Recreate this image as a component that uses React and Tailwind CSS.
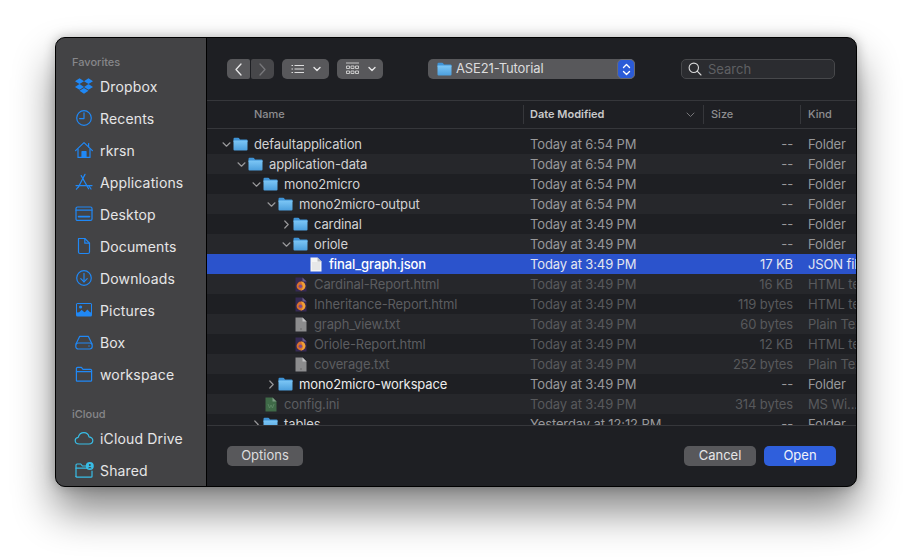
import React from "react";
import { FaDropbox } from "react-icons/fa";

const Folder = ({ w = 15, h = 14, id }) => (
  <svg width={w} height={h} viewBox="0 0 15 14" className="shrink-0">
    <defs>
      <linearGradient id={id} x1="0" y1="0" x2="0" y2="1">
        <stop offset="0" stopColor="#7cc6f5" />
        <stop offset="1" stopColor="#4c9fdd" />
      </linearGradient>
    </defs>
    <path d="M0.5 2 Q0.5 0.8 1.6 0.8 H5.2 Q5.9 0.8 6.3 1.4 L7 2.4 H13.5 Q14.5 2.4 14.5 3.4 V5 H0.5 Z" fill="#3f93d6" />
    <path d="M0.5 3.6 H14.5 V12.6 Q14.5 13.5 13.5 13.5 H1.5 Q0.5 13.5 0.5 12.6 Z" fill={`url(#${id})`} />
  </svg>
);

const Doc = ({ fill = "#8c8c8e", fold = "#c4c4c6", mark }) => (
  <svg width="12" height="15" viewBox="0 0 12 15" className="shrink-0">
    <path d="M0.5 0.5 H7.5 L11.5 4.5 V14.5 H0.5 Z" fill={fill} />
    <path d="M7.5 0.5 L11.5 4.5 H7.5 Z" fill={fold} />
    {mark}
  </svg>
);

const FileWhite = () => (
  <Doc
    fill="#f4f4f4"
    fold="#b9b9bb"
    mark={
      <g stroke="#cfcfd1" strokeWidth="0.7">
        <path d="M2 6h8M2 8h8M2 10h8M2 12h8" />
      </g>
    }
  />
);
const FileGray = () => <Doc mark={<path d="M5 12h2" stroke="#6a6a6c" strokeWidth="1" />} />;
const FileGreen = () => (
  <Doc
    fill="#3f6a48"
    fold="#7d9c83"
    mark={<path d="M3 7l1.5 4 1.5-3 1.5 3L9 7" fill="none" stroke="#5f8a68" strokeWidth="0.8" />}
  />
);
const FileFox = () => (
  <svg width="12" height="15" viewBox="0 0 12 15" className="shrink-0">
    <path d="M0.5 0.5 H7.5 L11.5 4.5 V14.5 H0.5 Z" fill="#352a55" />
    <path d="M7.5 0.5 L11.5 4.5 H7.5 Z" fill="#6a5e8a" />
    <circle cx="6" cy="9" r="4.4" fill="#d9702c" />
    <path d="M6 4.600 Q10 5 10.400 9 Q10 13 6 13.400 Q8.400 11 7.800 9 Q7.200 7 6 4.600Z" fill="#eea238" />
    <circle cx="5.400" cy="9.200" r="1.800" fill="#7a4a8e" />
  </svg>
);

const Chev = ({ open }) => (
  <svg width="9" height="9" viewBox="0 0 9 9" className="shrink-0" fill="none" stroke="#98989a" strokeWidth="1.2" strokeLinecap="round" strokeLinejoin="round">
    {open ? <path d="M1 2.800 L4.500 6.200 L8 2.800" /> : <path d="M2.800 1 L6.200 4.500 L2.800 8" />}
  </svg>
);

const rows = [
  { n: "defaultapplication", l: 0, o: "open", d: "Today at 6:54 PM", s: "--", k: "Folder" },
  { n: "application-data", l: 1, o: "open", d: "Today at 6:54 PM", s: "--", k: "Folder" },
  { n: "mono2micro", l: 2, o: "open", d: "Today at 6:54 PM", s: "--", k: "Folder" },
  { n: "mono2micro-output", l: 3, o: "open", d: "Today at 6:54 PM", s: "--", k: "Folder" },
  { n: "cardinal", l: 4, o: "closed", d: "Today at 3:49 PM", s: "--", k: "Folder" },
  { n: "oriole", l: 4, o: "open", d: "Today at 3:49 PM", s: "--", k: "Folder" },
  { n: "final_graph.json", l: 5, icon: FileWhite, sel: true, d: "Today at 3:49 PM", s: "17 KB", k: "JSON file" },
  { n: "Cardinal-Report.html", l: 4, icon: FileFox, dim: true, d: "Today at 3:49 PM", s: "16 KB", k: "HTML text" },
  { n: "Inheritance-Report.html", l: 4, icon: FileFox, dim: true, d: "Today at 3:49 PM", s: "119 bytes", k: "HTML text" },
  { n: "graph_view.txt", l: 4, icon: FileGray, dim: true, d: "Today at 3:49 PM", s: "60 bytes", k: "Plain Text" },
  { n: "Oriole-Report.html", l: 4, icon: FileFox, dim: true, d: "Today at 3:49 PM", s: "12 KB", k: "HTML text" },
  { n: "coverage.txt", l: 4, icon: FileGray, dim: true, d: "Today at 3:49 PM", s: "252 bytes", k: "Plain Text" },
  { n: "mono2micro-workspace", l: 3, o: "closed", d: "Today at 3:49 PM", s: "--", k: "Folder", bright: true },
  { n: "config.ini", l: 2, icon: FileGreen, dim: true, d: "Today at 3:49 PM", s: "314 bytes", k: "MS Wi..." },
  { n: "tables", l: 2, o: "closed", d: "Yesterday at 12:12 PM", s: "--", k: "Folder" },
];

const indentClass = ["pl-[15px]", "pl-[30px]", "pl-[45px]", "pl-[60px]", "pl-[75px]", "pl-[90px]"];

function Row({ r, i }) {
  const bg = r.sel ? "bg-[#2b53cc]" : i % 2 === 1 ? "bg-[#26272b]" : "bg-[#1e1f23]";
  const nameColor = r.sel ? "text-white" : r.dim ? "text-[#5c5d60]" : r.bright ? "text-[#ececec]" : "text-[#d2d2d3]";
  const otherColor = r.sel ? "text-[#e4e6f2]" : r.dim ? "text-[#58595c]" : "text-[#98989a]";
  return (
    <div className={`flex h-[20px] shrink-0 items-center text-[13px] leading-[20px] tracking-[-0.12px] ${bg}`}>
      <div className={`flex w-[316px] shrink-0 items-center ${indentClass[r.l]}`}>
        <div className="flex w-[11px] shrink-0 justify-start">{r.o ? <Chev open={r.o === "open"} /> : null}</div>
        <div className="flex w-[21px] shrink-0 items-center">
          {r.o ? <Folder id={`f${i}`} /> : <div className="flex w-[16px] justify-center">{React.createElement(r.icon)}</div>}
        </div>
        <span className={`whitespace-nowrap ${nameColor} ${r.sel ? "font-medium" : ""}`}>{r.n}</span>
      </div>
      <div className={`w-[180px] shrink-0 whitespace-nowrap pl-[7px] ${otherColor}`}>{r.d}</div>
      <div className={`w-[97px] shrink-0 whitespace-nowrap pr-[7px] text-right ${otherColor}`}>{r.s}</div>
      <div className={`w-[56px] shrink-0 overflow-hidden whitespace-nowrap pl-[8px] ${otherColor}`}>{r.k}</div>
    </div>
  );
}

const blue = "#2088f5";
const cyan = "#38bde6";
const I = ({ children, c = blue }) => (
  <svg width="20" height="18" viewBox="0 0 20 18" fill="none" stroke={c} strokeWidth="1.2" strokeLinecap="round" strokeLinejoin="round">
    {children}
  </svg>
);

const side = [
  ["Dropbox", <FaDropbox size={18} color={blue} />],
  ["Recents", <I><circle cx="10" cy="9" r="7.300" /><path d="M10 3.800 V9.600 H5.600" /></I>],
  ["rkrsn", <I><path d="M1.600 9.600 L10 1.600 L18.400 9.600" /><path d="M14.600 5.800 V2.600" /><path d="M4 8 V16.400 H16 V8" /><rect x="8" y="10.600" width="4" height="5.800" fill={blue} /></I>],
  ["Applications", <I><path d="M11 1.400 L4.400 14" /><path d="M7.200 2.600 L14.600 15.800" /><path d="M2 12.600 H18" /><path d="M2.400 16.200 L4.600 13.600" /><path d="M17 16 L15 13" /></I>],
  ["Desktop", <I><rect x="2" y="2" width="16" height="13.400" rx="1.500" /><path d="M2 5.200 H18" /><path d="M4.600 11.600 H15.400" strokeWidth="1.800" /></I>],
  ["Documents", <I><path d="M4.500 1.500 H10.800 L15.500 6.200 V15 Q15.500 16.500 14 16.500 H6 Q4.500 16.500 4.500 15 Z" /><path d="M10.800 1.500 V6.200 H15.500" /></I>],
  ["Downloads", <I><circle cx="10" cy="9" r="7.300" /><path d="M10 4.600 V12.800" /><path d="M6.800 9.600 L10 12.800 L13.200 9.600" /></I>],
  ["Pictures", <I><rect x="2" y="2" width="16" height="13.400" rx="1.500" fill={blue} stroke="none" /><rect x="3" y="3" width="14" height="8.400" fill="#434345" stroke="none" /><circle cx="6.600" cy="6" r="1.600" fill={blue} stroke="none" /><path d="M2.600 14 L7.600 8.800 L10.600 11.400 L13.400 8.600 L17.400 12.800 V14 Z" fill={blue} stroke="none" /></I>],
  ["Box", <I><path d="M2 11 L5.600 3.400 H14.400 L18 11" /><rect x="1.800" y="10" width="16.400" height="6" rx="2.400" /><circle cx="15" cy="13" r="0.700" fill={blue} stroke="none" /></I>],
  ["workspace", <I><path d="M2.400 15.400 V3.600 Q2.400 2.400 3.600 2.400 H7.400 L9 4.400 H16.400 Q17.600 4.400 17.600 5.600 V15.400 Q17.600 16.200 16.600 16.200 H3.400 Q2.400 16.200 2.400 15.400 Z" /><path d="M2.400 6.600 H17.600" /></I>],
];

const Item = ({ label, icon }) => (
  <div className="flex h-[32px] shrink-0 items-center pl-[18px]">
    <div className="flex w-[20px] shrink-0 items-center justify-center">{icon}</div>
    <span className="whitespace-nowrap pl-[6px] text-[14px] tracking-[0.15px] text-[#e6e6e7]">{label}</span>
  </div>
);

const Sep = () => <div className="h-[19px] w-px shrink-0 bg-[#36373b]" />;

export default function App() {
  return (
    <div className="h-[560px] w-[912px] overflow-hidden bg-white pl-[55px] pt-[37px] font-['Inter',sans-serif]">
      <div className="flex h-[450px] w-[802px] overflow-hidden rounded-[10px] border border-black bg-[#1e1f23] shadow-[0_24px_42px_rgba(0,0,0,0.48),0_0_12px_rgba(0,0,0,0.25)]">
        <aside className="flex w-[151px] shrink-0 flex-col overflow-hidden border-r border-black bg-[#434345] pt-[16px]">
          <div className="h-[16px] shrink-0 pl-[16px] text-[11px] font-medium leading-[17px] text-[#87878a]">Favorites</div>
          {side.map(([l, ic]) => (
            <Item key={l} label={l} icon={ic} />
          ))}
          <div className="mt-[16px] h-[16px] shrink-0 pl-[16px] text-[11px] font-medium leading-[17px] text-[#87878a]">iCloud</div>
          <Item
            label="iCloud Drive"
            icon={
              <I c={cyan}>
                <path d="M5.400 15 Q1.200 15 1.200 11.600 Q1.200 8.800 4.200 8.400 Q5.400 3.600 10 3.600 Q14 3.600 15 7.800 Q18.800 8.400 18.800 11.600 Q18.800 15 15 15 Z" />
              </I>
            }
          />
          <Item
            label="Shared"
            icon={
              <I c={cyan}>
                <path d="M2 15.400 V4 Q2 3 3 3 H6.800 L8.400 5 H12" />
                <path d="M2 7.200 H12.400" />
                <path d="M2 15.400 Q2 16.200 3 16.200 H17 Q18 16.200 18 15.400 V10" />
                <circle cx="15.800" cy="5" r="4" fill={cyan} stroke="none" />
                <circle cx="15.800" cy="3.900" r="1" fill="#434345" stroke="none" />
                <path d="M13.900 7.200 Q15.800 4.600 17.700 7.200 Z" fill="#434345" stroke="none" />
              </I>
            }
          />
        </aside>

        <main className="flex min-w-0 flex-1 flex-col text-[#d2d2d3]">
          <div className="flex h-[63px] shrink-0 items-start border-b border-[#36373b] pl-[20px] pt-[21px]">
            <button className="flex h-[20px] w-[23px] items-center justify-center rounded-l-[5px] rounded-r-[2px] bg-[#58585b]">
              <svg width="9" height="13" viewBox="0 0 9 13" fill="none" stroke="#e6e6e7" strokeWidth="1.300" strokeLinecap="round" strokeLinejoin="round"><path d="M7 1 L2 6.500 L7 12" /></svg>
            </button>
            <button className="ml-px flex h-[20px] w-[23px] items-center justify-center rounded-l-[2px] rounded-r-[5px] bg-[#47474a]">
              <svg width="9" height="13" viewBox="0 0 9 13" fill="none" stroke="#77777a" strokeWidth="1.300" strokeLinecap="round" strokeLinejoin="round"><path d="M2 1 L7 6.500 L2 12" /></svg>
            </button>
            <button className="ml-[8px] flex h-[20px] w-[47px] items-center justify-center gap-[9px] rounded-[5px] bg-[#58585b]">
              <svg width="13" height="10" viewBox="0 0 13 10" stroke="#dcdcdd" strokeWidth="1"><path d="M3.500 1.500H13M3.500 5H13M3.500 8.500H13M0.500 1.500H2M0.500 5H2M0.500 8.500H2" /></svg>
              <svg width="8" height="6" viewBox="0 0 8 6" fill="none" stroke="#e6e6e7" strokeWidth="1.400" strokeLinecap="round" strokeLinejoin="round"><path d="M1 1.500 L4 4.500 L7 1.500" /></svg>
            </button>
            <button className="ml-[8px] flex h-[20px] w-[46px] items-center justify-center gap-[8px] rounded-[5px] bg-[#58585b]">
              <svg width="15" height="14" viewBox="0 0 15 14" fill="none" stroke="#d2d2d3" strokeWidth="0.900"><path d="M1 1H14" /><path d="M1.500 4h3v2.500h-3zM6 4h3v2.500H6zM10.500 4h3v2.500h-3zM1.500 9h3v2.500h-3zM6 9h3v2.500H6zM10.500 9h3v2.500h-3z" /></svg>
              <svg width="8" height="6" viewBox="0 0 8 6" fill="none" stroke="#e6e6e7" strokeWidth="1.400" strokeLinecap="round" strokeLinejoin="round"><path d="M1 1.500 L4 4.500 L7 1.500" /></svg>
            </button>
            <div className="ml-[45px] flex h-[20px] w-[207px] items-center rounded-[5px] bg-[#58585b] pl-[9px]">
              <Folder id="pathf" w={15} h={14} />
              <span className="pb-px pl-[4px] text-[13px] leading-[19px] tracking-[-0.12px] text-[#dcdcdd]">ASE21-Tutorial</span>
              <div className="ml-auto flex h-[20px] w-[18px] items-center justify-center rounded-[5px] border border-[#6a6a6d] bg-[#2b5bd7]">
                <svg width="9" height="13" viewBox="0 0 9 13" fill="none" stroke="#fff" strokeWidth="1.400" strokeLinecap="round" strokeLinejoin="round"><path d="M1.500 4.500 L4.500 1.500 L7.500 4.500M1.500 8.500 L4.500 11.500 L7.500 8.500" /></svg>
              </div>
            </div>
            <div className="ml-[46px] flex h-[20px] w-[154px] items-center rounded-[5px] border border-[#47484b] bg-[#2b2c30] pl-[6px]">
              <svg width="14" height="14" viewBox="0 0 14 14" fill="none" stroke="#d8d8d9" strokeWidth="1.100" strokeLinecap="round"><circle cx="5.800" cy="5.800" r="4.700" /><path d="M9.200 9.200 L13 13" /></svg>
              <span className="pl-[6px] text-[13px] leading-[18px] text-[#5f6063]">Search</span>
            </div>
          </div>

          <div className="flex h-[28px] shrink-0 items-center border-b border-[#36373b] text-[11px] font-medium">
            <div className="w-[316px] shrink-0 pl-[47px] text-[#8e8e90]">Name</div>
            <Sep />
            <div className="flex w-[179px] shrink-0 items-center justify-between pl-[6px] pr-[8px] font-semibold text-[#c9c9ca]">
              <span>Date Modified</span>
              <svg width="9" height="6" viewBox="0 0 9 6" fill="none" stroke="#77777a" strokeWidth="1" strokeLinecap="round" strokeLinejoin="round"><path d="M1 1 L4.500 4.500 L8 1" /></svg>
            </div>
            <Sep />
            <div className="w-[96px] shrink-0 pl-[7px] text-[#8e8e90]">Size</div>
            <Sep />
            <div className="pl-[7px] text-[#8e8e90]">Kind</div>
          </div>

          <div className="flex min-h-0 flex-1 flex-col overflow-hidden pt-[5px]">
            {rows.map((r, i) => (
              <Row key={r.n} r={r} i={i} />
            ))}
          </div>

          <div className="flex h-[61px] shrink-0 items-center justify-between border-t border-[#36373b] px-[20px]">
            <button className="h-[20px] w-[76px] rounded-[5px] bg-[#58585b] pb-[2px] text-[13px] leading-[18px] text-[#dcdcdd]">Options</button>
            <div className="flex gap-[8px]">
              <button className="h-[20px] w-[72px] rounded-[5px] bg-[#58585b] pb-[2px] text-[13px] leading-[18px] text-[#e6e6e7]">Cancel</button>
              <button className="h-[20px] w-[72px] rounded-[5px] bg-[#2f5fdc] pb-[2px] text-[13px] leading-[18px] text-[#f0f2fa]">Open</button>
            </div>
          </div>
        </main>
      </div>
    </div>
  );
}
